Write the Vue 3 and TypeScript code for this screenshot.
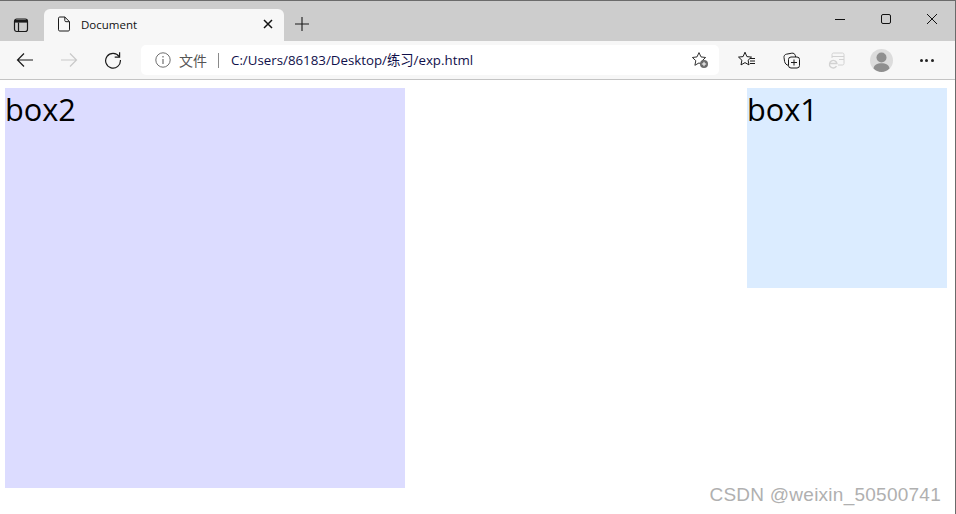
<script setup lang="ts">
const tabTitle = 'Document'
const url = 'C:/Users/86183/Desktop/练习/exp.html'
</script>

<template>
  <div class="window">
    <header class="tabstrip">
      <button class="strip-btn tab-actions" aria-label="tab actions">
        <svg width="16" height="16" viewBox="0 0 16 16" fill="none" stroke="#1a1a1a" stroke-width="1.2">
          <rect x="1.500" y="2" width="13" height="12.500" rx="2.200" />
          <path d="M5.500 5.500V14.500" />
          <path d="M2 2.800h12V5.600H2z" fill="#1a1a1a" stroke="none" />
        </svg>
      </button>
      <div class="tab">
        <svg class="doc" width="14" height="16" viewBox="0 0 14 16" fill="none" stroke="#1a1a1a" stroke-width="1">
          <path d="M1.500 2.200c0-.7.5-1.200 1.200-1.200h5.100l4.700 4.700v8.100c0 .7-.5 1.200-1.200 1.200H2.700c-.7 0-1.200-.5-1.200-1.200z" />
          <path d="M7.800 1v3.600c0 .6.5 1.100 1.100 1.100h3.600" />
        </svg>
        <span class="tab-title">{{ tabTitle }}</span>
        <svg class="tab-close" width="10" height="10" viewBox="0 0 10 10" stroke="#111" stroke-width="1.500" fill="none">
          <path d="M1 1l8 8M9 1l-8 8" />
        </svg>
      </div>
      <button class="strip-btn new-tab" aria-label="new tab">
        <svg width="16" height="16" viewBox="0 0 16 16" stroke="#1a1a1a" stroke-width="1.100" fill="none">
          <path d="M8 1v14M1 8h14" />
        </svg>
      </button>
      <div class="window-controls">
        <svg width="12" height="12" viewBox="0 0 12 12" stroke="#111" stroke-width="1" fill="none">
          <path d="M1 6.500h10" />
        </svg>
        <svg width="12" height="12" viewBox="0 0 12 12" stroke="#111" stroke-width="1" fill="none">
          <rect x="1.500" y="1.500" width="9" height="9" rx="1.500" />
        </svg>
        <svg width="12" height="12" viewBox="0 0 12 12" stroke="#111" stroke-width="1" fill="none">
          <path d="M1 1l10 10M11 1L1 11" />
        </svg>
      </div>
    </header>

    <nav class="toolbar">
      <div class="nav-buttons">
        <svg width="18" height="16" viewBox="0 0 18 16" stroke="#1a1a1a" stroke-width="1.200" fill="none">
          <path d="M17 8H1.500M8 1.500L1.500 8 8 14.500" />
        </svg>
        <svg width="18" height="16" viewBox="0 0 18 16" stroke="#c9c9c9" stroke-width="1.200" fill="none">
          <path d="M1 8h15.500M10 1.500L16.500 8 10 14.500" />
        </svg>
        <svg width="18" height="18" viewBox="0 0 18 18" stroke="#1a1a1a" stroke-width="1.200" fill="none">
          <path d="M15.200 5.600A7.400 7.400 0 1 0 16.400 9" />
          <path d="M15.600 1.200v4.900h-4.900" />
        </svg>
      </div>
      <div class="address">
        <svg class="info" width="16" height="16" viewBox="0 0 16 16" fill="none" stroke="#6f6f6f" stroke-width="1">
          <circle cx="8" cy="8" r="7.200" />
          <path d="M8 7v5" stroke-width="1.200" />
          <path d="M8 4v1.400" stroke-width="1.200" />
        </svg>
        <span class="scheme">文件</span>
        <span class="divider"></span>
        <span class="url">{{ url }}</span>
        <svg class="fav-add" width="18" height="18" viewBox="0 0 18 18" fill="none">
          <path d="M8 1.600l2 4.300 4.600.6-3.400 3.200.9 4.600L8 11.900l-4.100 2.400.9-4.600L1.400 6.500 6 5.900z" stroke="#333" stroke-width="1" stroke-linejoin="round" />
          <circle cx="13" cy="13" r="4" fill="#6a6a6a" />
          <path d="M13 10.800v4.400M10.800 13h4.400" stroke="#fff" stroke-width="1" />
        </svg>
      </div>
      <div class="tools">
        <svg width="18" height="18" viewBox="0 0 18 18" fill="none" stroke="#1a1a1a" stroke-width="1">
          <path d="M7 1.200l1.900 4.400 4.600.5-3.400 3.100.9 4.700L7 11.600l-4 2.300.9-4.700L.5 6.100l4.600-.5z" stroke-linejoin="round" />
          <path d="M12 7.500h5M12 10h5M12 12.500h5" />
        </svg>
        <svg width="18" height="18" viewBox="0 0 18 18" fill="none" stroke="#1a1a1a" stroke-width="1">
          <path d="M5.500 14.500C3.500 14 2 12.500 1.600 10.500L1 6.500C.8 4.800 1.800 3.500 3.400 3.200L8.800 2.200c1.600-.3 3 .6 3.500 2.100L12.600 6" />
          <rect x="5.500" y="6" width="11" height="11" rx="2.500" fill="#f7f7f7" />
          <path d="M11 8.500v6M8 11.500h6" />
        </svg>
        <svg width="18" height="18" viewBox="0 0 18 18" fill="none" stroke="#d2d2d2" stroke-width="1">
          <path d="M4 7V3.500C4 2.700 4.700 2 5.500 2h9c.8 0 1.500.7 1.500 1.500v9c0 .8-.7 1.500-1.500 1.500H10" />
          <path d="M4 5.500h12M11 8.500h5" />
          <path d="M8.500 15.200A3.800 3.800 0 1 1 9 12.500H1.500" stroke-width="1.300" />
        </svg>
        <span class="avatar">
          <svg width="23" height="23" viewBox="0 0 23 23" fill="#8f8f8f">
            <circle cx="11.500" cy="8.500" r="5" />
            <path d="M3.500 19.500c.6-3.800 3.600-5.200 8-5.200s7.400 1.400 8 5.200c-2 2-4.800 3.500-8 3.500s-6-1.500-8-3.500z" />
          </svg>
        </span>
        <span class="more" aria-label="more"><i></i><i></i><i></i></span>
      </div>
    </nav>

    <main class="page">
      <div class="box box2">box2</div>
      <div class="box box1">box1</div>
      <span class="watermark">CSDN @weixin_50500741</span>
    </main>
  </div>
</template>

<style>
html,
body {
  margin: 0;
  background: #fff;
}
</style>

<style scoped>
.window {
  width: 956px;
  height: 514px;
  box-sizing: border-box;
  border-top: 1px solid #6b6b6b;
  border-right: 1px solid #6b6b6b;
  display: flex;
  flex-direction: column;
  overflow: hidden;
  font-family: "Open Sans", "Noto Sans CJK SC", sans-serif;
  color: #000;
}
.tabstrip {
  height: 40px;
  flex: none;
  display: flex;
  align-items: flex-end;
  background: #cdcdcd;
}
.strip-btn {
  border: 0;
  padding: 0;
  background: none;
  display: flex;
  align-items: center;
  justify-content: center;
}
.tab-actions {
  width: 44px;
  height: 30px;
  margin-bottom: 1px;
  padding-right: 2px;
}
.tab {
  width: 240px;
  height: 32px;
  box-sizing: border-box;
  padding: 0 11px 2px 13px;
  display: flex;
  align-items: center;
  background: #f7f7f7;
  border-radius: 6px 6px 0 0;
}
.tab-title {
  margin-left: 10px;
  font-size: 11.500px;
  flex: 1;
  color: #111;
}
.new-tab {
  width: 36px;
  height: 32px;
  padding-bottom: 2px;
}
.window-controls {
  margin-left: auto;
  align-self: stretch;
  display: flex;
  align-items: center;
  gap: 34px;
  padding: 0 17px 4px 0;
}
.toolbar {
  height: 39px;
  flex: none;
  box-sizing: border-box;
  display: flex;
  align-items: center;
  background: #f7f7f7;
  border-bottom: 1px solid #c4c4c4;
}
.nav-buttons {
  width: 141px;
  flex: none;
  box-sizing: border-box;
  padding-left: 16px;
  display: flex;
  align-items: center;
  gap: 26px;
}
.address {
  width: 578px;
  height: 30px;
  flex: none;
  box-sizing: border-box;
  padding: 0 10px 0 14px;
  display: flex;
  align-items: center;
  background: #fff;
  border-radius: 5px;
}
.scheme {
  margin-left: 8px;
  margin-bottom: 1px;
  font-size: 14px;
  color: #555;
}
.divider {
  width: 1px;
  height: 15px;
  margin: 0 12px 0 11px;
  background: #8a8a8a;
}
.url {
  flex: 1;
  margin-bottom: 2px;
  font-size: 13.300px;
  color: #10104a;
}
.tools {
  flex: 1;
  display: grid;
  grid-auto-flow: column;
  grid-auto-columns: 45px;
  justify-items: center;
  align-items: center;
  padding-left: 5px;
}
.avatar {
  width: 23px;
  height: 23px;
  border-radius: 50%;
  overflow: hidden;
  background: #dcdcdc;
  display: flex;
}
.more {
  display: flex;
  gap: 2.500px;
}
.more i {
  width: 3px;
  height: 3px;
  border-radius: 50%;
  background: #222;
}
.page {
  position: relative;
  flex: 1;
  display: flex;
  justify-content: space-between;
  align-items: flex-start;
  padding: 8px 8px 0 5px;
  background: #fff;
}
.box {
  font-size: 30.700px;
  line-height: 42px;
}
.box1 {
  width: 200px;
  height: 200px;
  background: #dbecff;
}
.box2 {
  width: 400px;
  height: 400px;
  background: #dcdcff;
}
.watermark {
  position: absolute;
  right: 14px;
  bottom: 8px;
  font-family: "Liberation Sans", sans-serif;
  font-size: 19px;
  letter-spacing: 0.250px;
  color: #b0b0b0;
}
</style>
